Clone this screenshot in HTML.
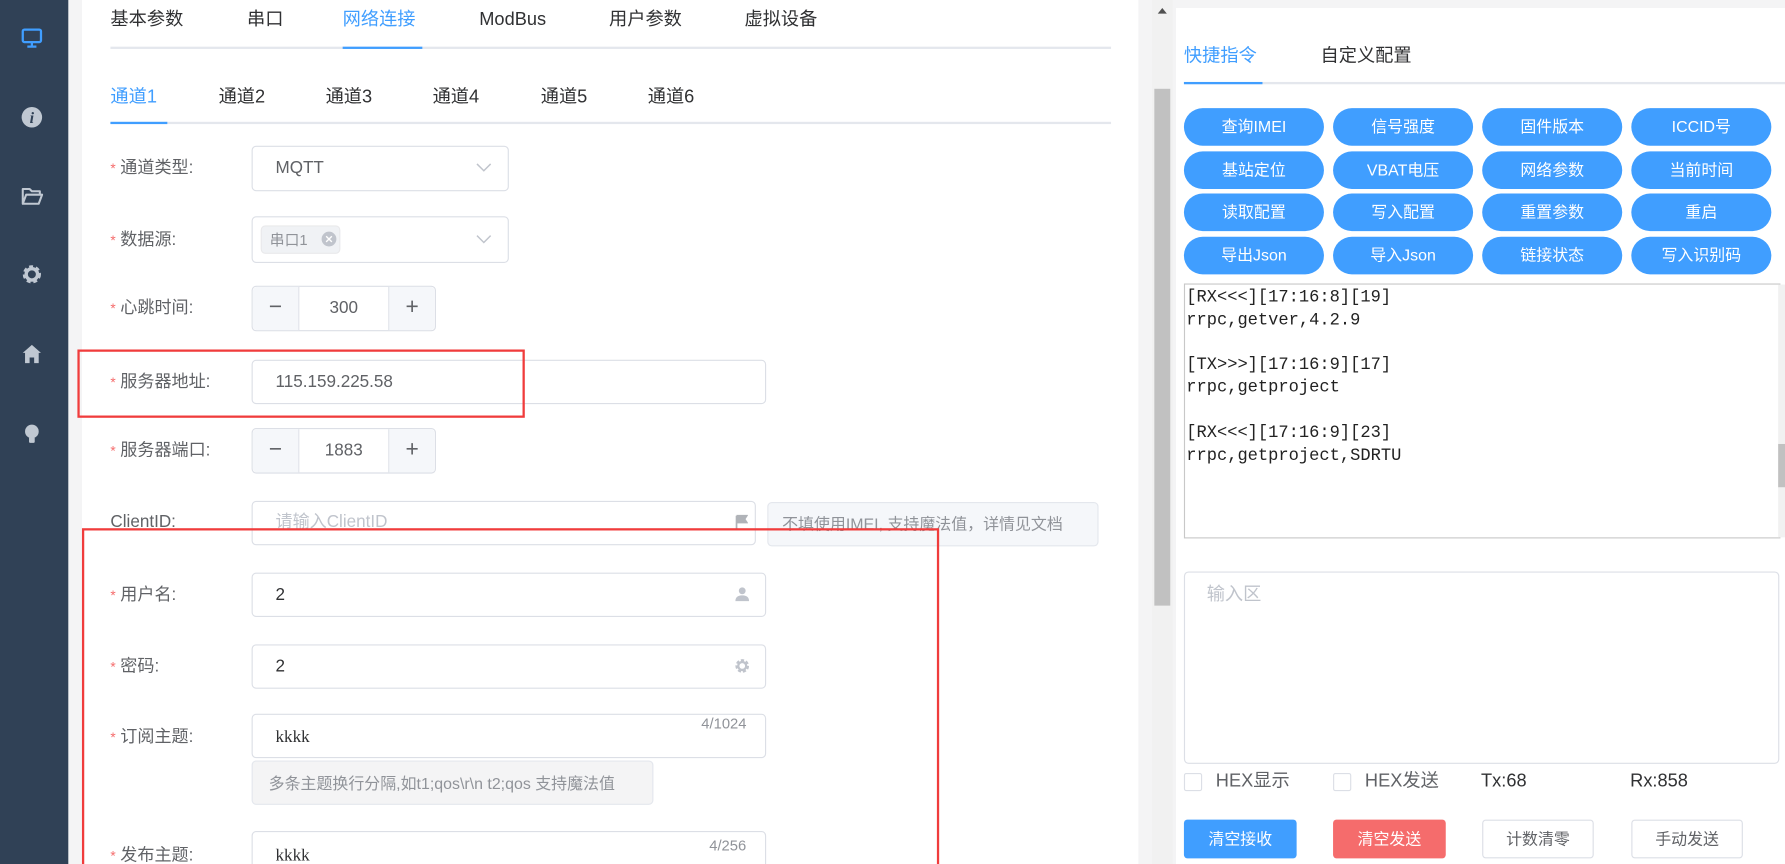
<!DOCTYPE html>
<html><head><meta charset="utf-8"><style>
*{box-sizing:border-box;margin:0;padding:0}
html,body{width:1785px;height:864px;overflow:hidden;background:#fff}
#w{position:absolute;left:0;top:0;width:1568px;height:759px;overflow:hidden;transform:scale(1.13839);transform-origin:0 0;font-family:"Liberation Sans","Noto Sans CJK SC",sans-serif;color:#606266;font-size:15px;background:#f4f4f5}
.a{position:absolute}
.t{position:absolute;white-space:nowrap;line-height:20px}
.inp{position:absolute;border:1px solid #dcdfe6;border-radius:4px;background:#fff}
.req{color:#f56c6c;font-size:12px;margin-right:4px;vertical-align:top}
.btn{position:absolute;height:33px;border-radius:17px;background:#409eff;color:#fff;font-size:14px;text-align:center;line-height:33px;width:123px}
.mono{font-family:"Liberation Mono","Noto Sans CJK SC",monospace;font-size:15px;color:#222;line-height:19.8px}
</style></head><body><div id="w">
<div class="a" style="left:0;top:0;width:60px;height:759px;background:#304156"></div>
<svg class="a" style="left:18px;top:23px" width="20" height="20" viewBox="0 0 20 20"><rect x="2" y="3" width="16" height="11" rx="1.5" fill="none" stroke="#409eff" stroke-width="2"/><path d="M10 14v3M6 18h8" stroke="#409eff" stroke-width="2"/></svg>
<svg class="a" style="left:18px;top:93px" width="20" height="20"><circle cx="10" cy="10" r="9" fill="#c0c8d2"/><text x="10" y="15" font-family="Liberation Serif" font-style="italic" font-weight="bold" font-size="14" text-anchor="middle" fill="#304156">i</text></svg>
<svg class="a" style="left:18px;top:162px" width="20" height="20"><path d="M2 4h6l2 2h7v3H5l-3 8z M2 17l3-8h14l-3 8z" fill="none" stroke="#c0c8d2" stroke-width="1.8" stroke-linejoin="round"/></svg>
<svg class="a" style="left:18px;top:231px" width="20" height="20"><circle cx="10" cy="10" r="6" fill="none" stroke="#c0c8d2" stroke-width="4" stroke-dasharray="3 2.2"/><circle cx="10" cy="10" r="5" fill="none" stroke="#c0c8d2" stroke-width="3"/></svg>
<svg class="a" style="left:18px;top:301px" width="20" height="20"><path d="M10 2l8 7h-2v9h-4v-5H8v5H4V9H2z" fill="#c0c8d2"/></svg>
<svg class="a" style="left:18px;top:371px" width="20" height="20"><circle cx="10" cy="8" r="6" fill="#c0c8d2"/><rect x="7.5" y="13" width="5" height="5" rx="1" fill="#c0c8d2"/></svg>

<div class="a" style="left:72px;top:0;width:928px;height:759px;background:#fff"></div>
<div class="t" style="left:97px;top:8px;font-size:16px;color:#303133">基本参数</div>
<div class="t" style="left:217px;top:8px;font-size:16px;color:#303133">串口</div>
<div class="t" style="left:301px;top:8px;font-size:16px;color:#409eff">网络连接</div>
<div class="t" style="left:421px;top:8px;font-size:16px;color:#303133">ModBus</div>
<div class="t" style="left:535px;top:8px;font-size:16px;color:#303133">用户参数</div>
<div class="t" style="left:654px;top:8px;font-size:16px;color:#303133">虚拟设备</div>
<div class="a" style="left:97px;top:41px;width:879px;height:2px;background:#e4e7ed"></div>
<div class="a" style="left:301px;top:41px;width:70px;height:2px;background:#409eff"></div>
<div class="t" style="left:97px;top:76px;font-size:16px;color:#409eff">通道1</div>
<div class="t" style="left:192px;top:76px;font-size:16px;color:#303133">通道2</div>
<div class="t" style="left:286px;top:76px;font-size:16px;color:#303133">通道3</div>
<div class="t" style="left:380px;top:76px;font-size:16px;color:#303133">通道4</div>
<div class="t" style="left:475px;top:76px;font-size:16px;color:#303133">通道5</div>
<div class="t" style="left:569px;top:76px;font-size:16px;color:#303133">通道6</div>
<div class="a" style="left:97px;top:107px;width:879px;height:2px;background:#e4e7ed"></div>
<div class="a" style="left:97px;top:107px;width:50px;height:2px;background:#409eff"></div>
<div class="t" style="left:97px;top:138px"><span class="req">*</span>通道类型:</div>
<div class="t" style="left:97px;top:201px"><span class="req">*</span>数据源:</div>
<div class="t" style="left:97px;top:261px"><span class="req">*</span>心跳时间:</div>
<div class="t" style="left:97px;top:326px"><span class="req">*</span>服务器地址:</div>
<div class="t" style="left:97px;top:386px"><span class="req">*</span>服务器端口:</div>
<div class="t" style="left:97px;top:449px">ClientID:</div>
<div class="t" style="left:97px;top:513px"><span class="req">*</span>用户名:</div>
<div class="t" style="left:97px;top:576px"><span class="req">*</span>密码:</div>
<div class="t" style="left:97px;top:638px"><span class="req">*</span>订阅主题:</div>
<div class="t" style="left:97px;top:742px"><span class="req">*</span>发布主题:</div>
<div class="inp" style="left:221px;top:128px;width:226px;height:40px"></div>
<div class="t" style="left:242px;top:138px;color:#606266">MQTT</div>
<svg class="a" style="left:418px;top:142px" width="14" height="10"><path d="M1 2l6 6 6-6" fill="none" stroke="#c0c4cc" stroke-width="1.3"/></svg>
<div class="inp" style="left:221px;top:190px;width:226px;height:41px"></div>
<div class="a" style="left:229px;top:198px;width:70px;height:25px;background:#f0f2f5;border:1px solid #e9e9eb;border-radius:4px"></div>
<div class="t" style="left:237px;top:201px;font-size:13px;color:#909399">串口1</div>
<svg class="a" style="left:282px;top:203px" width="14" height="14"><circle cx="7" cy="7" r="6.5" fill="#c0c4cc"/><path d="M4.5 4.5l5 5M9.5 4.5l-5 5" stroke="#fff" stroke-width="1.2"/></svg>
<svg class="a" style="left:418px;top:205px" width="14" height="10"><path d="M1 2l6 6 6-6" fill="none" stroke="#c0c4cc" stroke-width="1.3"/></svg>
<div class="inp" style="left:221px;top:251px;width:162px;height:40px"></div>
<div class="a" style="left:222px;top:252px;width:41px;height:38px;background:#f5f7fa;border-right:1px solid #dcdfe6;border-radius:4px 0 0 4px;text-align:center;line-height:36px;font-size:20px">−</div>
<div class="a" style="left:341px;top:252px;width:41px;height:38px;background:#f5f7fa;border-left:1px solid #dcdfe6;border-radius:0 4px 4px 0;text-align:center;line-height:36px;font-size:20px">+</div>
<div class="t" style="left:263px;top:261px;width:78px;text-align:center">300</div>
<div class="inp" style="left:221px;top:316px;width:452px;height:39px"></div>
<div class="t" style="left:242px;top:326px">115.159.225.58</div>
<div class="inp" style="left:221px;top:376px;width:162px;height:40px"></div>
<div class="a" style="left:222px;top:377px;width:41px;height:38px;background:#f5f7fa;border-right:1px solid #dcdfe6;border-radius:4px 0 0 4px;text-align:center;line-height:36px;font-size:20px">−</div>
<div class="a" style="left:341px;top:377px;width:41px;height:38px;background:#f5f7fa;border-left:1px solid #dcdfe6;border-radius:0 4px 4px 0;text-align:center;line-height:36px;font-size:20px">+</div>
<div class="t" style="left:263px;top:386px;width:78px;text-align:center">1883</div>
<div class="inp" style="left:221px;top:440px;width:443px;height:39px"></div>
<div class="t" style="left:242px;top:449px;color:#c0c4cc">请输入ClientID</div>
<svg class="a" style="left:645px;top:452px" width="12" height="14"><path d="M2 1v13M2 1h9l-2 3 2 3H2" fill="#b0b3b8" stroke="#b0b3b8" stroke-width="1.5"/></svg>
<div class="a" style="left:674px;top:441px;width:291px;height:39px;background:#f5f7fa;border:1px solid #e4e7ed;border-radius:4px"></div>
<div class="t" style="left:687px;top:450px;font-size:14px;color:#909399">不填使用IMEI, 支持魔法值，详情见文档</div>
<div class="inp" style="left:221px;top:503px;width:452px;height:39px"></div>
<div class="t" style="left:242px;top:513px;color:#303133">2</div>
<svg class="a" style="left:645px;top:515px" width="14" height="14"><circle cx="7" cy="4" r="3" fill="#c0c4cc"/><path d="M1 13c0-4 3-5 6-5s6 1 6 5z" fill="#c0c4cc"/></svg>
<div class="inp" style="left:221px;top:566px;width:452px;height:39px"></div>
<div class="t" style="left:242px;top:576px;color:#303133">2</div>
<svg class="a" style="left:645px;top:578px" width="14" height="14"><circle cx="7" cy="7" r="4.5" fill="none" stroke="#c0c4cc" stroke-width="3" stroke-dasharray="2.5 1.5"/><circle cx="7" cy="7" r="3.5" fill="none" stroke="#c0c4cc" stroke-width="2"/></svg>
<div class="inp" style="left:221px;top:627px;width:452px;height:39px"></div>
<div class="t" style="left:242px;top:638px;font-family:'Liberation Serif',serif;font-size:15px;color:#303133">kkkk</div>
<div class="t" style="left:616px;top:626px;font-size:13px;color:#909399">4/1024</div>
<div class="a" style="left:221px;top:668px;width:353px;height:39px;background:#f4f4f5;border:1px solid #e4e7ed;border-radius:4px"></div>
<div class="t" style="left:236px;top:678px;font-size:14px;color:#909399">多条主题换行分隔,如t1;qos\r\n t2;qos 支持魔法值</div>
<div class="inp" style="left:221px;top:730px;width:452px;height:40px"></div>
<div class="t" style="left:242px;top:742px;font-family:'Liberation Serif',serif;color:#303133">kkkk</div>
<div class="t" style="left:623px;top:733px;font-size:13px;color:#909399">4/256</div>
<div class="a" style="left:68px;top:307px;width:393px;height:60px;border:2px solid #f03c3c"></div>
<div class="a" style="left:72px;top:464px;width:753px;height:310px;border:2px solid #f03c3c"></div>
<div class="a" style="left:1012px;top:0;width:18px;height:759px;background:#f1f1f1"></div>
<div class="a" style="left:1014px;top:78px;width:14px;height:454px;background:#c1c1c1"></div>
<svg class="a" style="left:1016px;top:5px" width="10" height="8"><path d="M1 7l4-5 4 5z" fill="#505050"/></svg>
<div class="a" style="left:1033px;top:7px;width:535px;height:752px;background:#fff"></div>
<div class="t" style="left:1040px;top:40px;font-size:16px;color:#409eff">快捷指令</div>
<div class="t" style="left:1160px;top:40px;font-size:16px;color:#303133">自定义配置</div>
<div class="a" style="left:1040px;top:72px;width:528px;height:2px;background:#e4e7ed"></div>
<div class="a" style="left:1040px;top:72px;width:69px;height:2px;background:#409eff"></div>
<div class="btn" style="left:1040px;top:95px">查询IMEI</div>
<div class="btn" style="left:1171px;top:95px">信号强度</div>
<div class="btn" style="left:1302px;top:95px">固件版本</div>
<div class="btn" style="left:1433px;top:95px">ICCID号</div>
<div class="btn" style="left:1040px;top:133px">基站定位</div>
<div class="btn" style="left:1171px;top:133px">VBAT电压</div>
<div class="btn" style="left:1302px;top:133px">网络参数</div>
<div class="btn" style="left:1433px;top:133px">当前时间</div>
<div class="btn" style="left:1040px;top:170px">读取配置</div>
<div class="btn" style="left:1171px;top:170px">写入配置</div>
<div class="btn" style="left:1302px;top:170px">重置参数</div>
<div class="btn" style="left:1433px;top:170px">重启</div>
<div class="btn" style="left:1040px;top:208px">导出Json</div>
<div class="btn" style="left:1171px;top:208px">导入Json</div>
<div class="btn" style="left:1302px;top:208px">链接状态</div>
<div class="btn" style="left:1433px;top:208px">写入识别码</div>
<div class="a" style="left:1040px;top:249px;width:524px;height:224px;border:1px solid #c8c8c8"></div>
<div class="a" style="left:1562px;top:250px;width:6px;height:222px;background:#f1f1f1"></div>
<div class="a" style="left:1562px;top:390px;width:6px;height:38px;background:#c1c1c1"></div>
<div class="a mono" style="left:1042px;top:252px;white-space:pre">[RX&lt;&lt;&lt;][17:16:8][19]
rrpc,getver,4.2.9

[TX&gt;&gt;&gt;][17:16:9][17]
rrpc,getproject

[RX&lt;&lt;&lt;][17:16:9][23]
rrpc,getproject,SDRTU</div>
<div class="inp" style="left:1040px;top:502px;width:523px;height:169px"></div>
<div class="t" style="left:1060px;top:513px;font-size:16px;color:#c0c4cc">输入区</div>
<div class="a" style="left:1040px;top:679px;width:16px;height:16px;border:1px solid #dcdfe6;border-radius:2px;background:#fff"></div>
<div class="t" style="left:1068px;top:677px;font-size:16px">HEX显示</div>
<div class="a" style="left:1171px;top:679px;width:16px;height:16px;border:1px solid #dcdfe6;border-radius:2px;background:#fff"></div>
<div class="t" style="left:1199px;top:677px;font-size:16px">HEX发送</div>
<div class="t" style="left:1301px;top:677px;font-size:16px;color:#303133">Tx:68</div>
<div class="t" style="left:1432px;top:677px;font-size:16px;color:#303133">Rx:858</div>
<div class="a" style="left:1040px;top:720px;width:99px;height:34px;background:#409eff;color:#fff;border-radius:3px;text-align:center;line-height:34px;font-size:14px">清空接收</div>
<div class="a" style="left:1171px;top:720px;width:99px;height:34px;background:#f56c6c;color:#fff;border-radius:3px;text-align:center;line-height:34px;font-size:14px">清空发送</div>
<div class="a" style="left:1302px;top:720px;width:98px;height:34px;border:1px solid #dcdfe6;color:#606266;border-radius:3px;text-align:center;line-height:32px;font-size:14px">计数清零</div>
<div class="a" style="left:1433px;top:720px;width:98px;height:34px;border:1px solid #dcdfe6;color:#606266;border-radius:3px;text-align:center;line-height:32px;font-size:14px">手动发送</div>
</div></body></html>
